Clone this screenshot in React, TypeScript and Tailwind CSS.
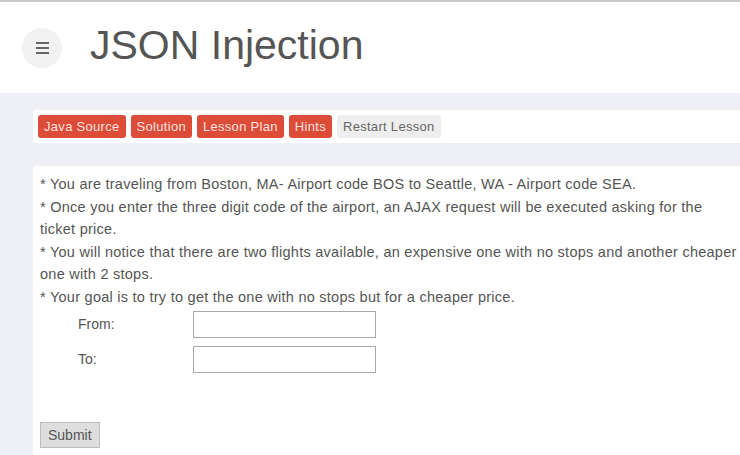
import React from 'react';

// wrapped the same way as the lesson page
const lines = [
  '* You are traveling from Boston, MA- Airport code BOS to Seattle, WA - Airport code SEA.',
  '* Once you enter the three digit code of the airport, an AJAX request will be executed asking for the',
  'ticket price.',
  '* You will notice that there are two flights available, an expensive one with no stops and another cheaper',
  'one with 2 stops.',
  '* Your goal is to try to get the one with no stops but for a cheaper price.',
];

export default function App() {
  return (
    <div className="w-[740px] h-[455px] overflow-hidden bg-[#eef0f6] text-[#555] font-['Liberation_Sans',Arial,sans-serif]">
      {/* Header */}
      <div className="h-[93px] bg-white border-t-2 border-[#c8c8c8] flex items-center">
        <div className="ml-[22px] w-10 h-10 rounded-full bg-[#f2f2f2] flex flex-col items-center justify-center gap-[3px]">
          <span className="block w-[13px] h-[2px] bg-[#666]" />
          <span className="block w-[13px] h-[2px] bg-[#666]" />
          <span className="block w-[13px] h-[2px] bg-[#666]" />
        </div>
        <h1 className="ml-[28px] text-[41px] leading-none text-[#555] mb-[4px]">JSON Injection</h1>
      </div>

      {/* Lesson buttons */}
      <div className="mt-[17px] ml-[33px] h-[33px] bg-white flex items-center gap-[5px] px-[5px] text-[13px] tracking-[0.3px]">
        {['Java Source', 'Solution', 'Lesson Plan', 'Hints'].map((b) => (
          <button key={b} className="h-[23px] px-[6px] rounded-[3px] bg-[#dd4b39] text-[#fbe3df]">
            {b}
          </button>
        ))}
        <button className="h-[23px] px-[6px] rounded-[3px] bg-[#eeeeee] text-[#666]">Restart Lesson</button>
      </div>

      {/* Content */}
      <div className="mt-[23px] ml-[33px] h-[300px] bg-white pl-[7px] pt-[7px] overflow-hidden">
        <div className="text-[14.5px] leading-[22.5px] tracking-[0.26px] whitespace-nowrap">
          {lines.map((l) => (
            <p key={l}>{l}</p>
          ))}
        </div>
        <div className="mt-[3px] flex flex-col gap-[8px] text-[14px]">
          <div className="flex items-center">
            <label className="w-[153px] pl-[38px]">From:</label>
            <input className="w-[183px] h-[27px] border border-[#a9a9a9] bg-white" />
          </div>
          <div className="flex items-center">
            <label className="w-[153px] pl-[38px]">To:</label>
            <input className="w-[183px] h-[27px] border border-[#a9a9a9] bg-white" />
          </div>
        </div>
        <button className="mt-[49px] h-[26px] px-[7px] bg-[#dedede] border border-[#bdbdbd] text-[14px] text-[#555]">
          Submit
        </button>
      </div>
    </div>
  );
}
